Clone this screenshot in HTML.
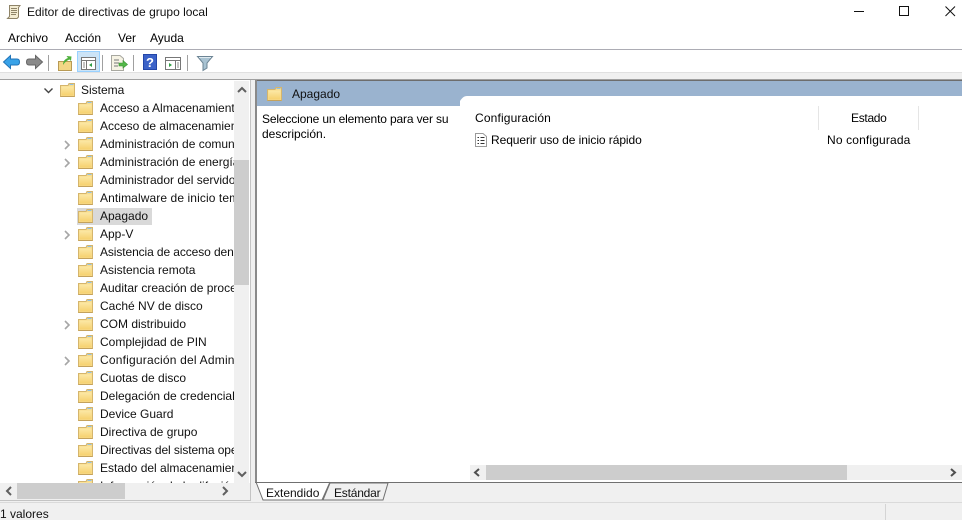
<!DOCTYPE html>
<html lang="es"><head><meta charset="utf-8"><title>Editor de directivas de grupo local</title>
<style>
html,body{margin:0;padding:0;width:962px;height:520px;overflow:hidden;background:#f0f0f0}
body{position:relative;font-family:"Liberation Sans",sans-serif;font-size:12px;color:#000}
.a{position:absolute}
.t{position:absolute;white-space:nowrap;line-height:16px;height:16px}
.row{position:absolute;left:100px;width:134px;overflow:hidden;white-space:nowrap;line-height:16px;height:16px;color:#111}
svg{position:absolute;display:block;overflow:visible}
.sep{position:absolute;top:55px;width:1px;height:16px;background:#a0a0a0}
</style></head><body>
<svg width="0" height="0" style="left:0;top:0"><defs>
<linearGradient id="fg" x1="0" y1="0" x2="0" y2="1"><stop offset="0" stop-color="#fce8a6"/><stop offset="1" stop-color="#f6d06e"/></linearGradient>
<g id="f"><path d="M.5 2.5V13.5H14.5V.5H9L8 2.5Z" fill="#f7dc8e" stroke="#d5b56c"/><path d="M1.5 3.5H13.5V12.5H1.5Z" fill="url(#fg)"/><path d="M9.5 1.5H13.5" stroke="#8fc1e8"/><path d="M.5 13.5H14.5" stroke="#c4a25c"/></g>
<path id="r" d="M0 0L4 4L0 8" fill="none" stroke="#a6a6a6" stroke-width="1.6"/>
</defs></svg>

<!-- title bar -->
<div class="a" style="left:0;top:0;width:962px;height:72px;background:#fff"></div>
<svg style="left:6px;top:4px" width="16" height="16" viewBox="0 0 16 16"><path d="M3.5 1.5H14L12.5 3.5V13L11 14.5H1.5L3.5 12.5Z" fill="#f3ecd2" stroke="#8f8468"/><path d="M5 4.5H11M5 6.5H11M5 8.5H11M5 10.5H10" stroke="#8f8468"/></svg>
<div class="t" style="left:27px;top:4px;color:#111">Editor de directivas de grupo local</div>
<svg style="left:854px;top:5px" width="12" height="12"><path d="M0 6.5H10" stroke="#111"/></svg>
<svg style="left:899px;top:6px" width="12" height="12"><rect x=".5" y=".5" width="9" height="9" fill="none" stroke="#111"/></svg>
<svg style="left:945px;top:6px" width="12" height="12"><path d="M.5 .5L10 10M10 .5L.5 10" stroke="#111"/></svg>

<!-- menu -->
<div class="t" style="left:8px;top:30px">Archivo</div>
<div class="t" style="left:65px;top:30px">Acción</div>
<div class="t" style="left:118px;top:30px">Ver</div>
<div class="t" style="left:150px;top:30px">Ayuda</div>
<div class="a" style="left:0;top:49px;width:962px;height:1px;background:#acacb4"></div>

<!-- toolbar -->
<svg style="left:3px;top:55px" width="17" height="14" viewBox="0 0 17 14"><path d="M.5 7L7.5 .5V4H14C16 4 16.5 5.5 16.5 7S16 10 14 10H7.5V13.5Z" fill="#38a2e8" stroke="#2174b8"/></svg>
<svg style="left:26px;top:55px" width="17" height="14" viewBox="0 0 17 14"><path d="M16.5 7L9.5 .5V4H3C1 4 .5 5.5 .5 7S1 10 3 10H9.5V13.5Z" fill="#8a8a8a" stroke="#666"/></svg>
<div class="sep" style="left:48px"></div>
<svg style="left:58px;top:55px" width="15" height="16" viewBox="0 0 15 16"><path d="M.5 6.5H13.5V15.5H.5Z" fill="#f3d686" stroke="#b89a55"/><path d="M5 10C5 6 7 4 10 3L8.5 1L13.5 1.5L13 6L11.5 4.5C9 5.5 7 7 5 10Z" fill="#4eb03c"/></svg>
<div class="a" style="left:77px;top:51px;width:21px;height:19px;background:#cce4f7;border:1px solid #99d1ff"></div>
<svg style="left:81px;top:57px" width="15" height="13" viewBox="0 0 15 13"><rect x=".5" y=".5" width="14" height="12" fill="#fff" stroke="#777"/><path d="M.5 3.5H14.5M5.5 3.5V12.5" stroke="#777"/><path d="M11 6V10L8 8Z" fill="#2f9e44"/><path d="M2 6H4M2 8H4M2 10H4" stroke="#888"/></svg>
<div class="sep" style="left:102px"></div>
<svg style="left:111px;top:55px" width="17" height="16" viewBox="0 0 17 16"><path d="M.5 .5H9L12.5 3.5V15.5H.5Z" fill="#f6f3e4" stroke="#a8a8a0"/><path d="M3 5H8M3 8H8M3 11H7" stroke="#777"/><path d="M8 8H12V5.5L16.5 9.5L12 13V11H8Z" fill="#53b848" stroke="#3a9233" stroke-width=".6"/></svg>
<div class="sep" style="left:133px"></div>
<svg style="left:143px;top:54px" width="14" height="16"><rect width="14" height="16" fill="#2346a8"/><rect x="1" y="1" width="12" height="14" fill="#3b62c8"/><text x="7" y="13" text-anchor="middle" font-family="Liberation Sans" font-size="13" font-weight="bold" fill="#fff">?</text></svg>
<svg style="left:165px;top:57px" width="16" height="13" viewBox="0 0 16 13"><rect x=".5" y=".5" width="15" height="12" fill="#fff" stroke="#777"/><path d="M.5 3.5H15.5M10.5 3.5V12.5" stroke="#777"/><path d="M4 6V10L7 8Z" fill="#2f9e44"/><path d="M12 6H14M12 8H14M12 10H14" stroke="#888"/></svg>
<div class="sep" style="left:187px"></div>
<svg style="left:197px;top:56px" width="16" height="15" viewBox="0 0 16 15"><path d="M.5 .5H15.5L10 7V12L6 14.5V7Z" fill="#a9c3d2" stroke="#6c8494"/><path d="M2 1.5H14" stroke="#dfeaf0"/></svg>

<div class="a" style="left:0;top:72px;width:962px;height:1px;background:#e0e0e0"></div>
<div class="a" style="left:0;top:79px;width:962px;height:1px;background:#a0a0a0"></div>

<!-- left pane -->
<div class="a" style="left:0;top:80px;width:250px;height:420px;background:#fff;border-right:1px solid #c4c4c4;border-bottom:1px solid #c4c4c4;overflow:hidden">
  <div class="a" style="left:0;top:1px;width:234px;height:402px;overflow:hidden">
    <svg style="left:44px;top:7px" width="10" height="6"><path d="M.5 .5L4.5 4.5L8.5 .5" fill="none" stroke="#444" stroke-width="1.4"/></svg>
    <div class="t" style="left:81px;top:1px;color:#111">Sistema</div>
    <svg style="left:60px;top:2px" width="15" height="14"><use href="#f"/></svg>
    <div class="a" style="left:77px;top:127px;width:75px;height:17px;background:#d9d9d9"></div>
    <svg style="left:78px;top:20px" width="15" height="14"><use href="#f"/></svg>
    <svg style="left:78px;top:38px" width="15" height="14"><use href="#f"/></svg>
    <svg style="left:78px;top:56px" width="15" height="14"><use href="#f"/></svg>
    <svg style="left:78px;top:74px" width="15" height="14"><use href="#f"/></svg>
    <svg style="left:78px;top:92px" width="15" height="14"><use href="#f"/></svg>
    <svg style="left:78px;top:110px" width="15" height="14"><use href="#f"/></svg>
    <svg style="left:78px;top:128px" width="15" height="14"><use href="#f"/></svg>
    <svg style="left:78px;top:146px" width="15" height="14"><use href="#f"/></svg>
    <svg style="left:78px;top:164px" width="15" height="14"><use href="#f"/></svg>
    <svg style="left:78px;top:182px" width="15" height="14"><use href="#f"/></svg>
    <svg style="left:78px;top:200px" width="15" height="14"><use href="#f"/></svg>
    <svg style="left:78px;top:218px" width="15" height="14"><use href="#f"/></svg>
    <svg style="left:78px;top:236px" width="15" height="14"><use href="#f"/></svg>
    <svg style="left:78px;top:254px" width="15" height="14"><use href="#f"/></svg>
    <svg style="left:78px;top:272px" width="15" height="14"><use href="#f"/></svg>
    <svg style="left:78px;top:290px" width="15" height="14"><use href="#f"/></svg>
    <svg style="left:78px;top:308px" width="15" height="14"><use href="#f"/></svg>
    <svg style="left:78px;top:326px" width="15" height="14"><use href="#f"/></svg>
    <svg style="left:78px;top:344px" width="15" height="14"><use href="#f"/></svg>
    <svg style="left:78px;top:362px" width="15" height="14"><use href="#f"/></svg>
    <svg style="left:78px;top:380px" width="15" height="14"><use href="#f"/></svg>
    <svg style="left:78px;top:398px" width="15" height="14"><use href="#f"/></svg>
    <svg style="left:65px;top:60px" width="6" height="10"><use href="#r"/></svg>
    <svg style="left:65px;top:78px" width="6" height="10"><use href="#r"/></svg>
    <svg style="left:65px;top:150px" width="6" height="10"><use href="#r"/></svg>
    <svg style="left:65px;top:240px" width="6" height="10"><use href="#r"/></svg>
    <svg style="left:65px;top:276px" width="6" height="10"><use href="#r"/></svg>
    <div class="row" style="top:19px">Acceso a Almacenamiento</div>
    <div class="row" style="top:37px">Acceso de almacenamiento</div>
    <div class="row" style="top:55px">Administración de comunicaciones</div>
    <div class="row" style="top:73px">Administración de energía</div>
    <div class="row" style="top:91px">Administrador del servidor</div>
    <div class="row" style="top:109px;letter-spacing:.1px">Antimalware de inicio temprano</div>
    <div class="row" style="top:127px">Apagado</div>
    <div class="row" style="top:145px">App-V</div>
    <div class="row" style="top:163px;letter-spacing:-.1px">Asistencia de acceso denegado</div>
    <div class="row" style="top:181px">Asistencia remota</div>
    <div class="row" style="top:199px">Auditar creación de procesos</div>
    <div class="row" style="top:217px">Caché NV de disco</div>
    <div class="row" style="top:235px">COM distribuido</div>
    <div class="row" style="top:253px">Complejidad de PIN</div>
    <div class="row" style="top:271px;letter-spacing:.2px">Configuración del Administrador</div>
    <div class="row" style="top:289px">Cuotas de disco</div>
    <div class="row" style="top:307px">Delegación de credenciales</div>
    <div class="row" style="top:325px">Device Guard</div>
    <div class="row" style="top:343px">Directiva de grupo</div>
    <div class="row" style="top:361px;letter-spacing:-.1px">Directivas del sistema operativo</div>
    <div class="row" style="top:379px">Estado del almacenamiento</div>
    <div class="row" style="top:397px">Información de la difusión</div>
  </div>
  <!-- v scroll -->
  <div class="a" style="left:234px;top:1px;width:15px;height:402px;background:#f0f0f0"></div>
  <div class="a" style="left:234px;top:80px;width:15px;height:125px;background:#cdcdcd"></div>
  <svg style="left:237px;top:7px" width="10" height="6"><path d="M1 5L5 1L9 5" fill="none" stroke="#606060" stroke-width="2"/></svg>
  <svg style="left:237px;top:391px" width="10" height="6"><path d="M1 1L5 5L9 1" fill="none" stroke="#606060" stroke-width="2"/></svg>
  <!-- h scroll -->
  <div class="a" style="left:0;top:403px;width:250px;height:17px;background:#f0f0f0"></div>
  <div class="a" style="left:17px;top:403px;width:108px;height:16px;background:#cdcdcd"></div>
  <svg style="left:6px;top:406px" width="6" height="10"><path d="M5 1L1 5L5 9" fill="none" stroke="#606060" stroke-width="2"/></svg>
  <svg style="left:222px;top:406px" width="6" height="10"><path d="M1 1L5 5L1 9" fill="none" stroke="#606060" stroke-width="2"/></svg>
</div>

<!-- right pane -->
<div class="a" style="left:255px;top:80px;width:707px;height:402px;background:#fff;border-left:2px solid #8a8a8a;box-sizing:border-box;overflow:hidden">
  <div class="a" style="left:0;top:0;width:705px;height:1px;background:#6d6d6d"></div>
  <!-- blue band with stepped, rounded notch -->
  <svg style="left:0;top:1px" width="705" height="25"><path d="M0 0H705V15H210C207 15 205 17 203 20V25H0Z" fill="#9ab3cf"/></svg>
  <svg style="left:10px;top:7px" width="15" height="14"><use href="#f"/></svg>
  <div class="t" style="left:35px;top:6px;color:#111">Apagado</div>
  <div class="t" style="left:5px;top:31px;letter-spacing:-.15px">Seleccione un elemento para ver su</div>
  <div class="t" style="left:5px;top:46px">descripción.</div>
  <div class="t" style="left:218px;top:30px;letter-spacing:.15px">Configuración</div>
  <div class="t" style="left:594px;top:30px;letter-spacing:-.3px">Estado</div>
  <div class="a" style="left:561px;top:26px;width:1px;height:24px;background:#e5e5e5"></div>
  <div class="a" style="left:661px;top:26px;width:1px;height:24px;background:#e5e5e5"></div>
  <svg style="left:218px;top:53px" width="12" height="14" viewBox="0 0 12 14"><path d="M.5 .5H8L11.5 3.5V13.5H.5Z" fill="#fff" stroke="#9a9a9a"/><path d="M2.5 4.5H4M2.5 7.5H4M2.5 10.5H4M5.5 4.5H9.5M5.5 7.5H9.5M5.5 10.5H9.5" stroke="#333"/></svg>
  <div class="t" style="left:234px;top:52px;letter-spacing:-.07px">Requerir uso de inicio rápido</div>
  <div class="t" style="left:570px;top:52px;letter-spacing:.15px">No configurada</div>
  <div class="a" style="left:213px;top:385px;width:492px;height:15px;background:#f0f0f0"></div>
  <div class="a" style="left:229px;top:385px;width:361px;height:15px;background:#cdcdcd"></div>
  <svg style="left:217px;top:388px" width="6" height="9"><path d="M5 1L1 4.5L5 8" fill="none" stroke="#505050" stroke-width="2"/></svg>
  <svg style="left:693px;top:388px" width="6" height="9"><path d="M1 1L5 4.5L1 8" fill="none" stroke="#505050" stroke-width="2"/></svg>
</div>
<div class="a" style="left:255px;top:482px;width:707px;height:1px;background:#707070"></div>

<!-- tabs -->
<svg style="left:255px;top:482px" width="140" height="20"><path d="M68 18H128L133 1H75Z" fill="#f0f0f0" stroke="#707070"/><path d="M1 1L8 18H67L75 1Z" fill="#fff"/><path d="M1 0L8 18H67L75 0" fill="none" stroke="#707070"/></svg>
<div class="t" style="left:266px;top:485px;color:#111">Extendido</div>
<div class="t" style="left:334px;top:485px;color:#111;letter-spacing:-.2px">Estándar</div>

<!-- status bar -->
<div class="a" style="left:0;top:502px;width:962px;height:1px;background:#dadada"></div>
<div class="a" style="left:885px;top:504px;width:1px;height:16px;background:#d4d4d4"></div>
<div class="t" style="left:0;top:506px;color:#111">1 valores</div>
</body></html>
